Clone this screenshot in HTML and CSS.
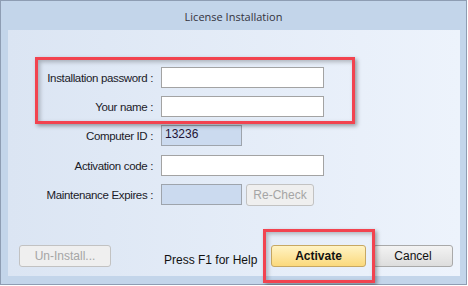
FILE: index.html
```html
<!DOCTYPE html>
<html>
<head>
<meta charset="utf-8">
<link rel="stylesheet" href="styles.css">
</head>
<body>
<div class="window">
  <div class="titlebar">License Installation</div>
  <div class="client">
    <div class="form">
      <div class="row">
        <label class="lbl">Installation password :</label>
        <div class="field input"></div>
      </div>
      <div class="row">
        <label class="lbl">Your name :</label>
        <div class="field input"></div>
      </div>
      <div class="row">
        <label class="lbl">Computer ID :</label>
        <div class="field ro short">13236</div>
      </div>
      <div class="row r4">
        <label class="lbl">Activation code :</label>
        <div class="field input"></div>
      </div>
      <div class="row">
        <label class="lbl">Maintenance Expires :</label>
        <div class="field ro short"></div>
        <div class="btn disabled recheck">Re-Check</div>
      </div>
    </div>
    <div class="footer">
      <div class="btn disabled uninstall">Un-Install...</div>
      <div class="help">Press F1 for Help</div>
      <div class="spacer"></div>
      <div class="btn activate">Activate</div>
      <div class="btn cancel">Cancel</div>
    </div>
  </div>
  <div class="mark mark1"></div>
  <div class="mark mark2"></div>
</div>
</body>
</html>
```
FILE: styles.css
```css
html, body {
  margin: 0;
  padding: 0;
  background: #ffffff;
}
.window {
  position: relative;
  width: 465px;
  height: 283px;
  border: 1px solid #8e9db3;
  background: #c3d5ea;
  font-family: "Liberation Sans", Arial, sans-serif;
  font-size: 11px;
  color: #1a1a28;
}
.titlebar {
  height: 29px;
  line-height: 31px;
  text-align: center;
  font-family: "Open Sans", "Noto Sans", sans-serif;
  font-size: 11px;
  color: #33333d;
}
.client {
  margin-left: 7px;
  width: 452px;
  height: 246px;
  background: linear-gradient(to right, #dbe5f3, #edf3fc);
  display: flex;
  flex-direction: column;
}
.form {
  padding-top: 37px;
  display: flex;
  flex-direction: column;
  gap: 8px;
}
.row {
  display: flex;
  align-items: center;
  height: 21px;
}
.r4 { margin-top: 1px; }
.lbl {
  width: 145px;
  text-align: right;
  margin-right: 8px;
  padding-top: 1px;
  font-size: 11.5px;
  letter-spacing: -0.35px;
}
.field {
  box-sizing: border-box;
  height: 21px;
  border: 1px solid #a3a3a3;
}
.input {
  width: 163px;
  background: #ffffff;
}
.ro {
  background: #cbdaef;
  border-color: #9ea4ac;
  color: #1e1436;
  font-size: 12px;
  padding: 1px 0 0 3px;
  line-height: 14px;
}
.short { width: 81px; }
.btn {
  box-sizing: border-box;
  height: 22px;
  border: 1px solid #a8a8a8;
  border-radius: 3px;
  display: flex;
  align-items: center;
  justify-content: center;
  font-size: 12px;
}
.disabled {
  background: #efefef;
  border-color: #c2c2c2;
  color: #a5a5a5;
}
.recheck {
  width: 68px;
  margin-left: 4px;
}
.footer {
  margin-top: auto;
  padding-bottom: 9px;
  display: flex;
  align-items: center;
}
.uninstall {
  width: 92px;
  margin-left: 11px;
}
.help {
  margin-left: 53px;
  font-size: 12px;
  padding-top: 9px;
  color: #111111;
}
.spacer { flex: 1; }
.activate {
  width: 95px;
  background: linear-gradient(#fff3c4, #fbd97c);
  border-color: #c7a863;
  font-weight: bold;
  color: #111111;
}
.cancel {
  width: 80px;
  margin-left: 7px;
  margin-right: 7px;
  background: linear-gradient(#f3f3f3, #dddddd);
  border-color: #a9a9a9;
  color: #111111;
}
.mark {
  position: absolute;
  box-sizing: border-box;
  border: 3px solid #f2434f;
  box-shadow: 2px 2px 4px rgba(0,0,0,0.35), inset 2px 2px 4px rgba(0,0,0,0.25);
}
.mark1 {
  left: 34px;
  top: 56px;
  width: 320px;
  height: 67px;
}
.mark2 {
  left: 262px;
  top: 228px;
  width: 112px;
  height: 54px;
}
```
